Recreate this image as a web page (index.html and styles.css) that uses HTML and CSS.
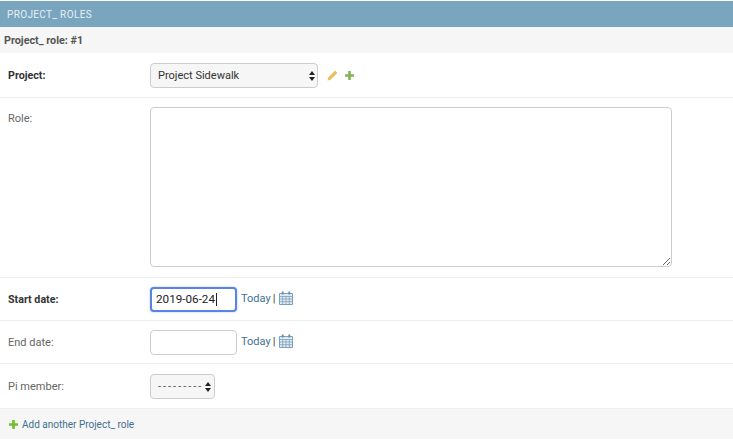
FILE: index.html
```html
<!DOCTYPE html>
<html lang="en">
<head>
<meta charset="utf-8">
<title>Project_ roles</title>
<link rel="stylesheet" href="styles.css">
</head>
<body>
<div class="module">
  <h2 class="caption">PROJECT_ ROLES</h2>
  <h3 class="subtitle">Project_ role: #1</h3>
  <div class="row row-project">
    <label class="label required">Project:</label>
    <div class="select-wrap select-project">
      <select class="select"><option>Project Sidewalk</option></select>
      <svg class="arrows" width="6" height="10" viewBox="0 0 6 10"><path d="M3 0 6 4H0zM3 10 0 6h6z" fill="#222"/></svg>
    </div>
    <svg class="icon-edit" width="11" height="11" viewBox="0 0 11 11"><path d="M8 .6 10.400 3 3.600 9.800.5 10.500 1.200 7.400z" fill="#e8c25e"/></svg>
    <svg class="icon-add" width="9" height="9" viewBox="0 0 9 9"><path d="M3.200 0h2.600v3.200H9v2.600H5.800V9H3.200V5.800H0V3.200h3.200z" fill="#83b455"/></svg>
  </div>
  <div class="row row-role">
    <label class="label">Role:</label>
    <textarea class="textarea"></textarea>
  </div>
  <div class="row row-date">
    <label class="label required">Start date:</label>
    <div class="input-wrap">
      <input class="input input-focus" type="text" value="2019-06-24">
      <span class="caret"></span>
    </div>
    <span class="shortcuts"><a class="link">Today</a> <span class="sep">|</span>
      <svg class="icon-cal" width="14" height="14" viewBox="0 0 14 14"><path d="M.5 2.500h13v11H.5z" fill="#e3ebf1" stroke="#7ba1ba"/><path d="M.5 5.500h13M.5 8h13M.5 10.700h13M3.700 5.500v8M7 5.500v8M10.300 5.500v8" stroke="#7ba1ba" stroke-width=".8" fill="none"/><path d="M3.700 .5v3M10.300 .5v3" stroke="#5f8fae" stroke-width="1.800"/></svg>
    </span>
  </div>
  <div class="row row-date">
    <label class="label">End date:</label>
    <div class="input-wrap">
      <input class="input" type="text">
    </div>
    <span class="shortcuts"><a class="link">Today</a> <span class="sep">|</span>
      <svg class="icon-cal" width="14" height="14" viewBox="0 0 14 14"><path d="M.5 2.500h13v11H.5z" fill="#e3ebf1" stroke="#7ba1ba"/><path d="M.5 5.500h13M.5 8h13M.5 10.700h13M3.700 5.500v8M7 5.500v8M10.300 5.500v8" stroke="#7ba1ba" stroke-width=".8" fill="none"/><path d="M3.700 .5v3M10.300 .5v3" stroke="#5f8fae" stroke-width="1.800"/></svg>
    </span>
  </div>
  <div class="row row-pi">
    <label class="label">Pi member:</label>
    <div class="select-wrap select-pi">
      <select class="select select-dashes"><option>---------</option></select>
      <svg class="arrows" width="6" height="10" viewBox="0 0 6 10"><path d="M3 0 6 4H0zM3 10 0 6h6z" fill="#222"/></svg>
    </div>
  </div>
  <div class="add-row">
    <svg class="icon-add-row" width="9" height="9" viewBox="0 0 9 9"><path d="M3.200 0h2.600v3.200H9v2.600H5.800V9H3.200V5.800H0V3.200h3.200z" fill="#70bf2b"/></svg>
    <a class="link add-link">Add another Project_ role</a>
  </div>
</div>
</body>
</html>
```
FILE: styles.css
```css
html, body {
  margin: 0;
  padding: 0;
  background: #fff;
}
body {
  padding-top: 1px;
  font-family: Roboto, "Liberation Sans", sans-serif;
  color: #333;
  font-size: 10.500px;
}
.caption {
  margin: 0;
  height: 26px;
  display: flex;
  align-items: center;
  padding-left: 7px;
  background: #7aa5bf;
  color: #e6eff5;
  font-size: 10px;
  font-weight: 400;
  letter-spacing: .36px;
}
.subtitle {
  margin: 0;
  height: 26px;
  display: flex;
  align-items: center;
  padding-left: 4px;
  background: #f6f6f6;
  color: #555;
  font-size: 10.800px;
  font-weight: 700;
}
.row {
  display: flex;
  align-items: center;
  border-bottom: 1px solid #eee;
  box-sizing: border-box;
}
.row-project { height: 45px; }
.row-role { height: 180px; align-items: flex-start; padding-top: 9px; }
.row-date { height: 43px; }
.row-pi { height: 44px; border-bottom: 0; }
.label {
  width: 142px;
  padding-left: 8px;
  flex: none;
  color: #666;
  font-size: 11px;
}
.row-role .label { padding-top: 5px; }
.required {
  color: #333;
  font-size: 10.700px;
  font-weight: 700;
}
.select-wrap {
  position: relative;
  height: 25px;
}
.select-project { width: 168px; }
.select-pi { width: 65px; }
.select {
  appearance: none;
  width: 100%;
  height: 100%;
  box-sizing: border-box;
  border: 1px solid #ccc;
  border-radius: 4px;
  background: #f6f6f6;
  padding: 0 0 0 7px;
  font-family: Roboto, "Liberation Sans", sans-serif;
  font-size: 11px;
  color: #333;
}
.select-dashes {
  letter-spacing: 2px;
  color: #555;
}
.arrows {
  position: absolute;
  right: 3px;
  top: 8px;
}
.select-pi .arrows { right: 4px; }
.icon-edit { margin-left: 9px; }
.icon-add { margin-left: 7px; }
.textarea {
  display: block;
  width: 522px;
  height: 160px;
  box-sizing: border-box;
  border: 1px solid #ccc;
  border-radius: 4px;
  background: #fff;
  margin: 0;
}
.input-wrap {
  position: relative;
  height: 25px;
}
.input {
  display: block;
  width: 87px;
  height: 25px;
  box-sizing: border-box;
  border: 1px solid #ccc;
  border-radius: 4px;
  padding: 0 5px;
  font-family: Roboto, "Liberation Sans", sans-serif;
  font-size: 11.700px;
  color: #222;
  background: #fff;
  margin: 0;
}
.input-focus {
  border: 2px solid #5b83e2;
  box-shadow: 0 0 2px #9db6ef;
  padding: 0 4px;
}
.caret {
  position: absolute;
  left: 66px;
  top: 6px;
  width: 1px;
  height: 13px;
  background: #222;
}
.shortcuts {
  display: flex;
  align-items: center;
  margin-left: 4px;
  margin-top: -2px;
  font-size: 11px;
  gap: 2px;
}
.link {
  color: #3f7090;
  text-decoration: none;
}
.sep { color: #333; }
.icon-cal { margin-left: 2px; }
.add-row {
  height: 31px;
  display: flex;
  align-items: center;
  padding-left: 9px;
  gap: 4px;
  background: #f6f6f6;
  border-top: 1px solid #eee;
  box-sizing: border-box;
}
.add-link { font-size: 10px; }
```
